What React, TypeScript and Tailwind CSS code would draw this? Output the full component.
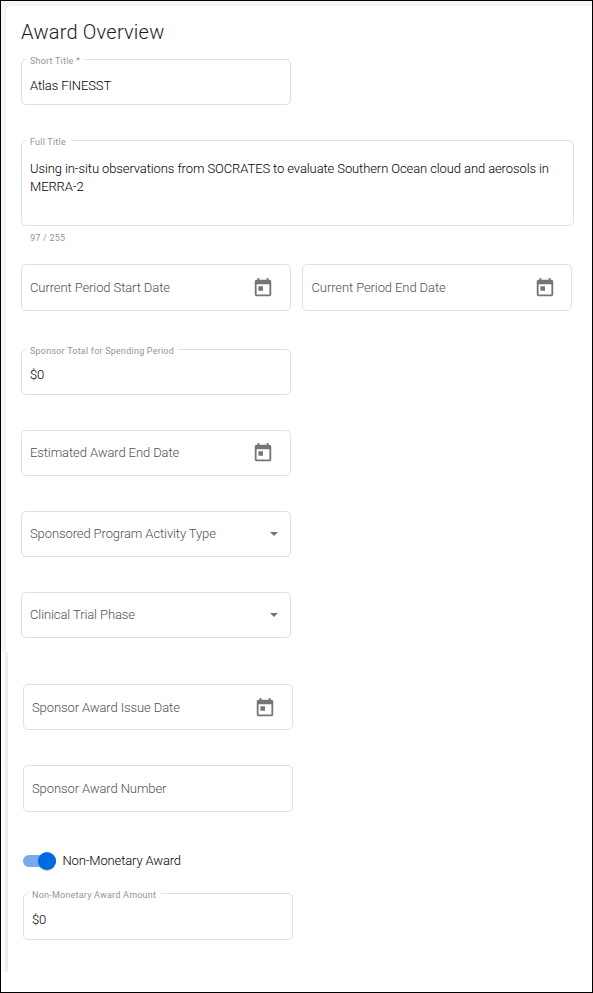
import type { ReactNode } from 'react'

interface FieldProps {
  label: string
  value?: string
  icon?: ReactNode
  className?: string
  valueClassName?: string
}

const CalendarIcon = () => (
  <svg className="mr-2 size-[22px] shrink-0 fill-[#757575]" viewBox="0 0 24 24">
    <path d="M19 3h-1V1h-2v2H8V1H6v2H5c-1.11 0-1.99.9-1.99 2L3 19c0 1.1.89 2 2 2h14c1.1 0 2-.9 2-2V5c0-1.1-.9-2-2-2zm0 16H5V8h14v11zM7 10h5v5H7z" />
  </svg>
)

const ArrowIcon = () => (
  <svg className="mr-1 h-1 w-2 shrink-0 fill-[#757575]" viewBox="0 0 8 4">
    <path d="M0 0l4 4 4-4z" />
  </svg>
)

const Field = ({ label, value, icon, className = '', valueClassName = 'pt-[17px]' }: FieldProps) => {
  if (!value) {
    return (
      <div className={`flex w-[270px] items-center justify-between rounded-[5px] border border-[#e0e0e0] px-2 ${className}`}>
        <span className="whitespace-nowrap text-[13px] tracking-[-0.1px] text-[#505050]">{label}</span>
        {icon}
      </div>
    )
  }

  return (
    <div className={`relative w-[270px] rounded-[5px] border border-[#e0e0e0] px-2 ${className}`}>
      <span className="absolute -top-1 left-1 whitespace-nowrap bg-white pr-[5px] pl-1 text-[9px] leading-[10px] font-normal tracking-[0.22px] text-[#959595]">
        {label}
      </span>
      <p className={`text-[13px] leading-[18px] tracking-[-0.1px] text-black ${valueClassName}`}>{value}</p>
    </div>
  )
}

const App = () => {
  return (
    <div
      className="flex h-[993px] w-[593px] flex-col border border-black bg-white font-light"
      style={{ fontFamily: 'Roboto, sans-serif' }}
    >
      <div className="h-[651px] bg-[#f8f5f6] pt-[5px] pl-[5px]">
        <section className="h-[646px] rounded-tl-[4px] bg-white pt-[14px] pl-[15px] shadow-[0_0_1px_rgba(0,0,0,0.25)] [clip-path:inset(-1px_0_0_-1px)]">
          <h1 className="h-[24px] text-[20px] leading-[24px] tracking-[0.22px] text-[#1c1c1c]">Award Overview</h1>
          <Field label="Short Title *" value="Atlas FINESST" className="mt-[15px] h-[46px]" />
          <Field
            label="Full Title"
            value="Using in-situ observations from SOCRATES to evaluate Southern Ocean cloud and aerosols in MERRA-2"
            className="mt-[35px] h-[86px] w-[553px]!"
            valueClassName="pt-[19px]"
          />
          <div className="mt-[7px] h-[10px] pl-[9px] text-[9px] leading-[10px] font-normal tracking-[0.22px] text-[#959595]">
            97 / 255
          </div>
          <div className="mt-[21px] flex gap-[11px]">
            <Field label="Current Period Start Date" icon={<CalendarIcon />} className="h-[47px]" />
            <Field label="Current Period End Date" icon={<CalendarIcon />} className="h-[47px] pr-[7.5px]! pl-[8.5px]!" />
          </div>
          <Field
            label="Sponsor Total for Spending Period"
            value="$0"
            className="mt-[38px] h-[46px]"
            valueClassName="pt-4"
          />
          <Field label="Estimated Award End Date" icon={<CalendarIcon />} className="mt-[35px] h-[46px]" />
          <Field label="Sponsored Program Activity Type" icon={<ArrowIcon />} className="mt-[35px] h-[46px]" />
          <Field label="Clinical Trial Phase" icon={<ArrowIcon />} className="mt-[35px] h-[46px]" />
        </section>
      </div>

      <div className="ml-[3px] flex h-[320px]">
        <div className="w-1 bg-linear-to-r from-[#f8f6f6] to-[#ececec]" />
        <section className="pt-[32px] pl-[15px]">
          <Field label="Sponsor Award Issue Date" icon={<CalendarIcon />} className="h-[46px] pt-0.5" />
          <Field label="Sponsor Award Number" className="mt-[35px] h-[47px]" />
          <div className="mt-[40px] flex h-[18px] items-center">
            <div className="flex h-3 w-[32.5px] items-center justify-end rounded-full bg-[#73acef]">
              <div className="size-[18px] shrink-0 rounded-full bg-[#006be0] shadow-[0_1px_1px_rgba(0,0,0,0.25)]" />
            </div>
            <span className="ml-[7px] text-[13px] tracking-[-0.14px] text-black">Non-Monetary Award</span>
          </div>
          <Field label="Non-Monetary Award Amount" value="$0" className="mt-[23px] h-[47px]" />
        </section>
      </div>
    </div>
  )
}

export default App
